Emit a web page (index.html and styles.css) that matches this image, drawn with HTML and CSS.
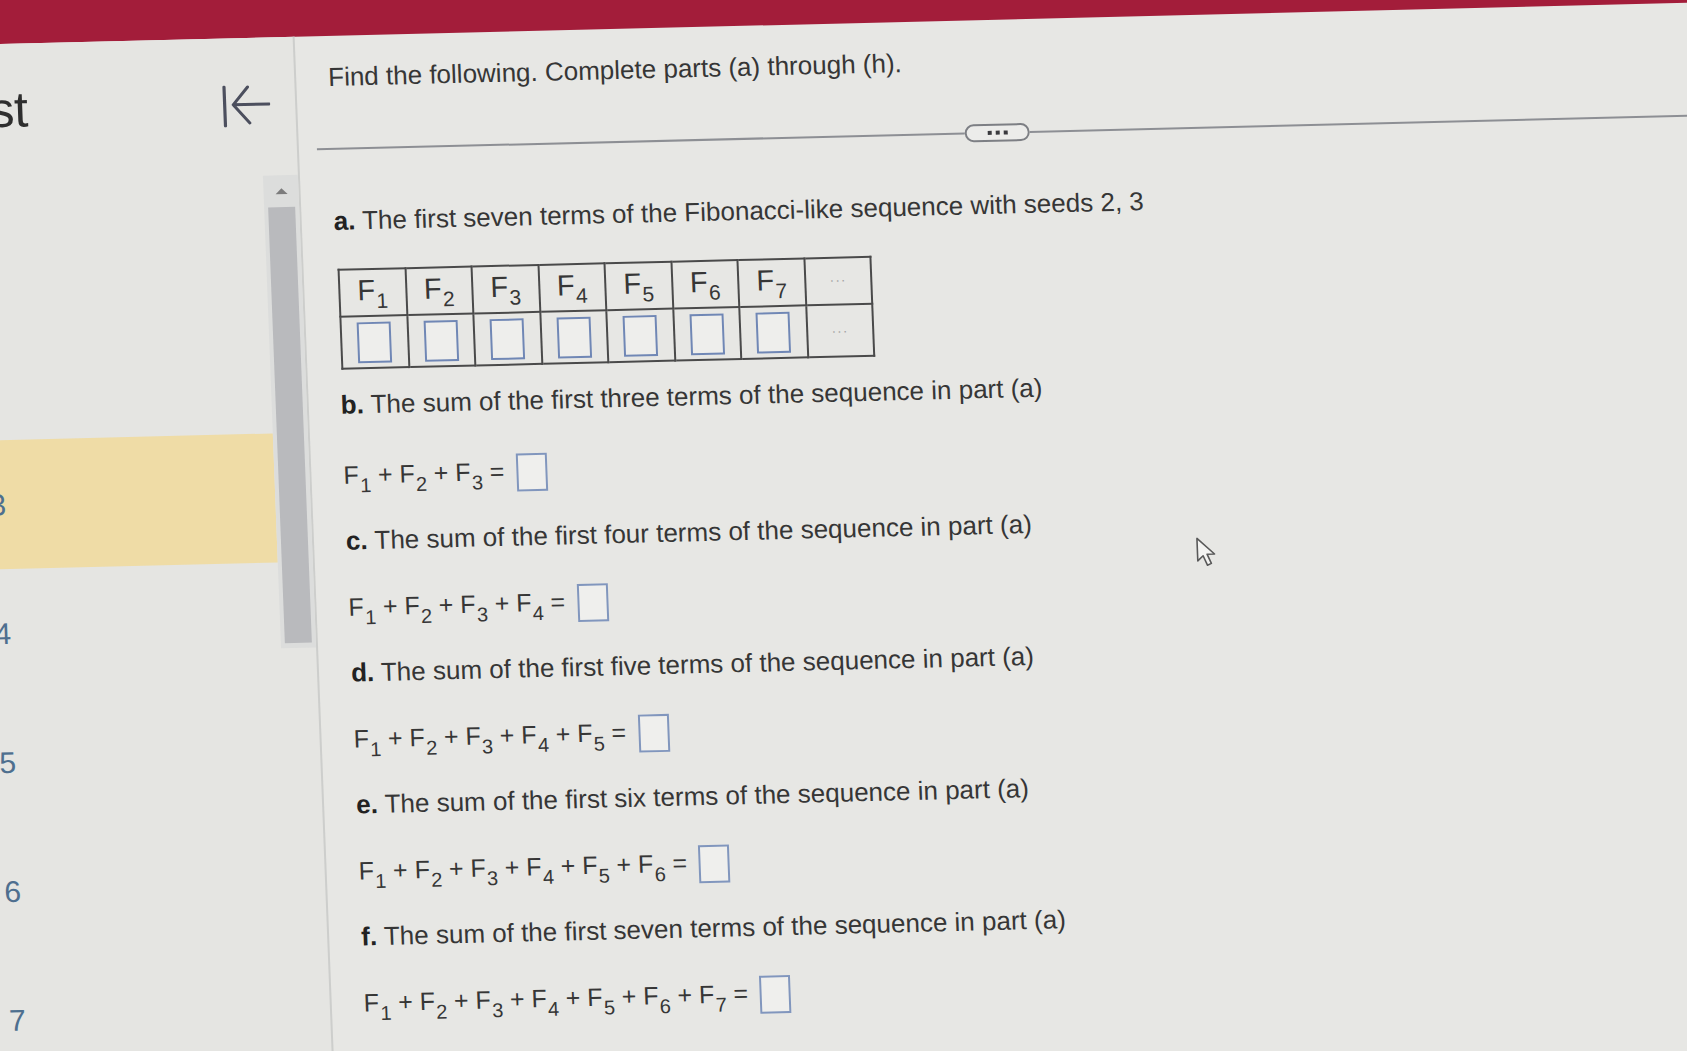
FILE: index.html
```html
<!DOCTYPE html>
<html lang="en">
<head>
<meta charset="utf-8">
<title>Fibonacci-like sequence</title>
<link rel="stylesheet" href="styles.css">
</head>
<body>
<div class="screen">
  <div class="topbar"></div>
  <div class="main">
    <aside class="panel">
      <div class="panel-head">
        <span class="panel-title">st</span>
        <svg class="back-icon" width="48" height="42" viewBox="0 0 48 42" aria-hidden="true">
          <path d="M2.5 1.5v39" fill="none" stroke="#4c4f5e" stroke-width="3.2" stroke-linecap="round"/>
          <path d="M11 19.5h36M26 2L11 19.5 27 38" fill="none" stroke="#4c4f5e" stroke-width="3" stroke-linecap="round" stroke-linejoin="round"/>
        </svg>
      </div>
      <div class="panel-body">
        <ul class="qlist">
          <li class="qitem"></li>
          <li class="qitem"></li>
          <li class="qitem current"><span class="qnum">3</span></li>
          <li class="qitem"><span class="qnum">4</span></li>
          <li class="qitem"><span class="qnum">5</span></li>
          <li class="qitem"><span class="qnum">6</span></li>
          <li class="qitem"><span class="qnum">7</span></li>
        </ul>
        <div class="scroll">
          <div class="scroll-arrow"><span class="tri"></span></div>
          <div class="scroll-thumb"></div>
        </div>
      </div>
    </aside>

    <section class="content">
      <p class="instructions">Find the following. Complete parts (a) through (h).</p>

      <div class="divider">
        <span class="rule rule-left"></span>
        <span class="pill"><i></i><i></i><i></i></span>
        <span class="rule rule-right"></span>
      </div>

      <p class="q q-a"><b>a.</b> The first seven terms of the Fibonacci-like sequence with seeds 2, 3</p>

      <table class="terms">
        <tr>
          <th>F<sub>1</sub></th><th>F<sub>2</sub></th><th>F<sub>3</sub></th><th>F<sub>4</sub></th>
          <th>F<sub>5</sub></th><th>F<sub>6</sub></th><th>F<sub>7</sub></th><th class="more">···</th>
        </tr>
        <tr>
          <td><span class="box"></span></td><td><span class="box"></span></td><td><span class="box"></span></td><td><span class="box"></span></td>
          <td><span class="box"></span></td><td><span class="box"></span></td><td><span class="box"></span></td><td class="more">···</td>
        </tr>
      </table>

      <div class="part part-b">
        <p class="q"><b>b.</b> The sum of the first three terms of the sequence in part (a)</p>
        <div class="eq">F<sub>1</sub> + F<sub>2</sub> + F<sub>3</sub> =<span class="ans"></span></div>
      </div>

      <div class="part">
        <p class="q"><b>c.</b> The sum of the first four terms of the sequence in part (a)</p>
        <div class="eq">F<sub>1</sub> + F<sub>2</sub> + F<sub>3</sub> + F<sub>4</sub> =<span class="ans"></span></div>
      </div>

      <div class="part">
        <p class="q"><b>d.</b> The sum of the first five terms of the sequence in part (a)</p>
        <div class="eq">F<sub>1</sub> + F<sub>2</sub> + F<sub>3</sub> + F<sub>4</sub> + F<sub>5</sub> =<span class="ans"></span></div>
      </div>

      <div class="part">
        <p class="q"><b>e.</b> The sum of the first six terms of the sequence in part (a)</p>
        <div class="eq">F<sub>1</sub> + F<sub>2</sub> + F<sub>3</sub> + F<sub>4</sub> + F<sub>5</sub> + F<sub>6</sub> =<span class="ans"></span></div>
      </div>

      <div class="part">
        <p class="q"><b>f.</b> The sum of the first seven terms of the sequence in part (a)</p>
        <div class="eq">F<sub>1</sub> + F<sub>2</sub> + F<sub>3</sub> + F<sub>4</sub> + F<sub>5</sub> + F<sub>6</sub> + F<sub>7</sub> =<span class="ans"></span></div>
      </div>

      <svg class="cursor" width="22" height="31" viewBox="0 0 22 31" aria-hidden="true">
        <path d="M1.5 1.5V24L7 19l4 9.5 4-1.7-4-9.3h7.5z" fill="#f3f3f1" stroke="#595959" stroke-width="1.6" stroke-linejoin="round"/>
      </svg>
    </section>
  </div>
</div>
</body>
</html>
```

FILE: styles.css
```css
html, body {
  margin: 0;
  padding: 0;
  height: 100%;
  overflow: hidden;
  background: #e5e5e2;
}

.screen {
  margin-left: -40px;
  width: 1800px;
  height: 1150px;
  background: #e7e7e4;
  font-family: "Liberation Sans", Arial, sans-serif;
  color: #363636;
  transform-origin: 40px 0;
  transform: rotate(-1.4deg) skewX(0.8deg);
}

.topbar {
  height: 44px;
  background: #a31d3a;
}

.main {
  display: flex;
  height: 1106px;
}

/* ---------- left panel ---------- */
.panel {
  width: 331px;
  flex: none;
  border-right: 2px solid #cdcecc;
  background: #e5e5e2;
  display: flex;
  flex-direction: column;
}

.panel-head {
  display: flex;
  align-items: flex-start;
  height: 138px;
  padding-left: 25px;
}

.panel-title {
  margin-top: 36px;
  font-size: 50px;
  line-height: 60px;
  color: #2e2e2e;
}

.back-icon {
  margin-left: auto;
  margin-right: 25px;
  margin-top: 47px;
}

.panel-body {
  display: flex;
  flex: 1;
}

.qlist {
  list-style: none;
  margin: 0;
  padding: 0;
  flex: 1;
}

.qitem {
  height: 129px;
  display: flex;
  align-items: center;
  padding-left: 10px;
}

.qitem.current {
  background: #efdca6;
}

.qnum {
  font-size: 30px;
  color: #4e6f8f;
}

.scroll {
  width: 35px;
  height: 473px;
  flex: none;
  box-sizing: border-box;
  padding: 0 4px;
  background: #dcdddc;
  display: flex;
  flex-direction: column;
}

.scroll-arrow {
  height: 32px;
  display: flex;
  align-items: center;
  justify-content: center;
}

.tri {
  width: 0;
  height: 0;
  border-left: 6px solid transparent;
  border-right: 6px solid transparent;
  border-bottom: 6px solid #7c7c7c;
}

.scroll-thumb {
  height: 436px;
  background: #b9babd;
}

/* ---------- content ---------- */
.content {
  flex: 1;
  position: relative;
  padding-left: 32px;
  min-width: 0;
}

.instructions {
  margin: 26px 0 0;
  font-size: 26px;
  line-height: 30px;
}

.divider {
  display: flex;
  align-items: center;
  margin: 48px 0 0 -14px;
  height: 18px;
}

.rule {
  height: 2px;
  background: #8d8f94;
}

.rule-left {
  width: 648px;
  flex: none;
}

.rule-right {
  flex: 1;
}

.pill {
  width: 65px;
  height: 18px;
  box-sizing: border-box;
  border: 2px solid #7d7f84;
  border-radius: 9px;
  background: #ececea;
  display: flex;
  align-items: center;
  justify-content: center;
  gap: 4px;
}

.pill i {
  width: 4px;
  height: 4px;
  background: #3a3a3e;
}

.q {
  margin: 0;
  font-size: 26px;
  line-height: 30px;
  height: 30px;
  white-space: nowrap;
}

.q b {
  color: #222;
}

.q-a {
  margin-top: 48px;
}

/* table of terms */
.terms {
  margin: 33px 0 0 2px;
  border-collapse: collapse;
  table-layout: fixed;
  width: 534px;
}

.terms th,
.terms td {
  border: 2px solid #4a4a4a;
  padding: 0;
  text-align: center;
  vertical-align: middle;
}

.terms th {
  height: 47px;
  font-weight: normal;
  font-size: 29px;
  line-height: 1;
  padding-bottom: 4px;
  box-sizing: border-box;
}

.terms th sub {
  font-size: 21px;
  vertical-align: -8px;
  line-height: 0;
  margin-left: 1px;
}

.terms td {
  height: 50px;
}

.terms .more {
  font-size: 14px;
  color: #a3a3a3;
  letter-spacing: 1px;
}

.box {
  display: block;
  width: 34px;
  height: 41px;
  margin: 0 auto;
  box-sizing: border-box;
  border: 2px solid #7087b5;
  background: #eeeeec;
}

/* parts b..f */
.part {
  margin-top: 30px;
}

.part-b {
  margin-top: 20px;
}

.part-b .eq {
  margin-top: 38px;
}

.eq {
  margin-top: 34px;
  height: 38px;
  font-size: 25px;
  line-height: 30px;
  white-space: nowrap;
}

.eq sub {
  font-size: 20px;
  vertical-align: -9px;
  line-height: 0;
  margin-left: 1px;
}

.ans {
  display: inline-block;
  width: 31px;
  height: 38px;
  box-sizing: border-box;
  border: 2px solid #8196bd;
  background: #efefed;
  vertical-align: -12px;
  margin-left: 12px;
}

.cursor {
  position: absolute;
  left: 881px;
  top: 522px;
}
```
